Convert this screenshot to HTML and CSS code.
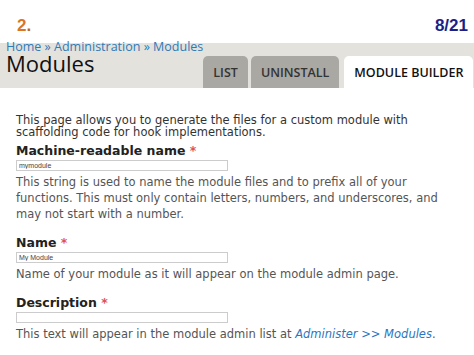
FILE: index.html
```html
<!DOCTYPE html>
<html lang="en">
<head>
  <meta charset="UTF-8">
  <title>Modules</title>
  <link rel="stylesheet" href="styles.css">
</head>
<body>
  <div class="slide-top">
    <span class="step">2<span class="dot">.</span></span>
    <span class="count">8/21</span>
  </div>

  <div class="header">
    <div class="titles">
      <div class="crumbs"><a href="#">Home</a> » <a href="#">Administration</a> » <a href="#">Modules</a></div>
      <h1>Modules</h1>
    </div>
    <ul class="tabs">
      <li><a href="#">LIST</a></li>
      <li><a href="#">UNINSTALL</a></li>
      <li class="active"><a href="#">MODULE BUILDER</a></li>
    </ul>
  </div>

  <div class="content">
    <p class="intro">This page allows you to generate the files for a custom module with scaffolding code for hook implementations.</p>

    <div class="field">
      <label>Machine-readable name <span class="req">*</span></label>
      <input type="text" value="mymodule">
      <div class="desc">This string is used to name the module files and to prefix all of your functions. This must only contain letters, numbers, and underscores, and may not start with a number.</div>
    </div>

    <div class="field">
      <label>Name <span class="req">*</span></label>
      <input type="text" value="My Module">
      <div class="desc">Name of your module as it will appear on the module admin page.</div>
    </div>

    <div class="field">
      <label>Description <span class="req">*</span></label>
      <input type="text" value="">
      <div class="desc">This text will appear in the module admin list at <a href="#">Administer &gt;&gt; Modules</a>.</div>
    </div>
  </div>
</body>
</html>
```

FILE: styles.css
```css
body { margin: 0; font-family: "DejaVu Sans", sans-serif; background: #fff; color: #333; }
a { text-decoration: none; }

.slide-top { display: flex; justify-content: space-between; align-items: flex-end; height: 36px; padding: 0 6px 0 17px; font-family: "Liberation Sans", Arial, sans-serif; font-weight: bold; font-size: 17px; }
.step { color: #d9761f; }
.dot { color: #b86a2a; }
.count { color: #1d1f86; }

.header { display: flex; justify-content: space-between; align-items: flex-end; background: #e4e2dd; height: 45px; margin-top: 7px; padding: 0 7px 0 6px; font-family: "Open Sans", sans-serif; }
.titles { align-self: flex-start; margin-top: -2px; white-space: nowrap; }
.crumbs { font-size: 12.5px; line-height: 12px; color: #2f7bb5; }
.crumbs a { color: #2f7bb5; }
h1 { margin: 0; font-size: 22px; font-weight: normal; color: #111; line-height: 18px; padding-top: 1px; }

.tabs { display: flex; flex-shrink: 0; gap: 3px; list-style: none; margin: 0; padding: 0; }
.tabs li + li.active { margin-left: 2px; }
.tabs li a { display: block; height: 32px; box-sizing: border-box; background: #a9a8a3; color: #333; font-size: 12.5px; font-weight: 600; line-height: 16px; padding: 9px 10px 7px; border-radius: 5px 5px 0 0; white-space: nowrap; }
.tabs li.active a { background: #fff; color: #111; }

.content { padding: 26px 16px 0; }
.intro { margin: 0; font-size: 11.5px; line-height: 12px; }
.field { margin-top: 12px; }
.intro + .field { margin-top: 4px; }
.field label { display: block; font-weight: bold; font-size: 12.5px; color: #222; line-height: 17px; }
.req { color: #e0505a; }
.field input { display: block; box-sizing: border-box; width: 212px; height: 11px; margin: 1px 0 3px; padding: 0 2px; border: 1px solid #ccc; font-size: 7px; font-family: "Liberation Sans", sans-serif; color: #444; }
.desc { font-size: 11.5px; line-height: 16px; color: #555; }
.desc a { color: #2a76c0; font-style: italic; }
```
